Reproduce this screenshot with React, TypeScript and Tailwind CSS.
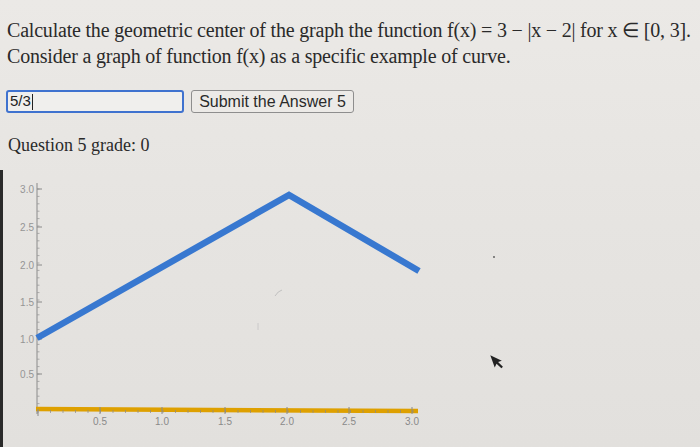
import React from "react";

function Chart() {
  const yLabels = [
    { t: "3.0", y: 189 },
    { t: "2.5", y: 227 },
    { t: "2.0", y: 265 },
    { t: "1.5", y: 302 },
    { t: "1.0", y: 339 },
    { t: "0.5", y: 374 },
  ];
  const xLabels = [
    { t: "0.5", x: 100 },
    { t: "1.0", x: 162 },
    { t: "1.5", x: 225 },
    { t: "2.0", x: 287 },
    { t: "2.5", x: 349 },
    { t: "3.0", x: 412 },
  ];
  const minorY: number[] = [];
  for (let y = 189; y <= 405; y += 7.4) minorY.push(y);
  const minorX: number[] = [];
  for (let x = 38; x <= 418; x += 12.5) minorX.push(x);
  return (
    <svg width="700" height="277" viewBox="0 170 700 277" className="block">
      {/* y axis */}
      <line x1="37" y1="183" x2="37" y2="414" stroke="#8a8a8a" strokeWidth="1" />
      {minorY.map((y, i) => (
        <line key={i} x1="37" y1={y} x2="39.5" y2={y} stroke="#9a9a9a" strokeWidth="0.8" />
      ))}
      {yLabels.map((l) => (
        <g key={l.t}>
          <line x1="37" y1={l.y} x2="42" y2={l.y} stroke="#8a8a8a" strokeWidth="1" />
          <text x="34" y={l.y + 3.5} textAnchor="end" fontSize="10" fill="#959595" fontFamily="'Liberation Sans', Arial, sans-serif">
            {l.t}
          </text>
        </g>
      ))}
      {/* x axis orange */}
      <line x1="36" y1="409" x2="418" y2="411" stroke="#dea000" strokeWidth="4.5" />
      {minorX.map((x, i) => (
        <line key={i} x1={x} y1="410" x2={x} y2="413" stroke="#8a8a8a" strokeWidth="0.7" />
      ))}
      {xLabels.map((l) => (
        <g key={l.t}>
          <line x1={l.x} y1="407" x2={l.x} y2="414" stroke="#8a8a8a" strokeWidth="1" />
          <text x={l.x} y="425" textAnchor="middle" fontSize="10" fill="#8a8a8a" fontFamily="'Liberation Sans', Arial, sans-serif">
            {l.t}
          </text>
        </g>
      ))}
      <line x1="38" y1="409" x2="38" y2="416" stroke="#8a8a8a" strokeWidth="1" />
      {/* blue function */}
      <polyline
        points="37,338 289,195 419,271"
        fill="none"
        stroke="#3878d0"
        strokeWidth="6.5"
        strokeLinejoin="miter"
      />
      {/* faint marks */}
      <path d="M275 296 q3 -5 7 -6" stroke="#b8b8b8" strokeWidth="0.8" fill="none" />
      <line x1="258" y1="323" x2="258" y2="330" stroke="#c4c4c4" strokeWidth="0.8" />
      <circle cx="494" cy="257" r="0.9" fill="#555" />
      {/* mouse cursor */}
      <path d="M492 355 L492 368 L495 365 L498 371 L500 370 L497 364 L501 364 Z" fill="#222" transform="rotate(-20 492 360)" />
    </svg>
  );
}

export default function App() {
  return (
    <div
      className="w-[700px] h-[447px] overflow-hidden relative text-[#2a2a2a]"
      style={{ background: "linear-gradient(180deg, #ebe9e6 0%, #e6e4e1 50%, #e2e0dd 100%)" }}
    >
      <div className="pl-[7px] pt-[17px] font-['Liberation_Serif',serif] text-[20px] leading-[26px] tracking-[-0.2px]">
        <div className="whitespace-nowrap">
          Calculate the geometric center of the graph the function f(x) = 3 − |x − 2| for x ∈ [0, 3].
        </div>
        <div className="whitespace-nowrap">Consider a graph of function f(x) as a specific example of curve.</div>
      </div>
      <div className="flex items-center pl-[6px] pt-[21px] gap-[7px]">
        <div className="w-[178px] h-[23px] border-2 border-[#3f72cf] rounded-[3px] bg-[#f0efed] flex items-center pl-[2px] font-['Liberation_Sans',Arial,sans-serif] text-[15px] text-[#222]">
          5/3<span className="inline-block w-px h-[16px] bg-[#222] ml-px" />
        </div>
        <div className="w-[163px] h-[23px] border border-[#8e8e8e] rounded-[3px] bg-[#eceae7] flex items-center justify-center font-['Liberation_Sans',Arial,sans-serif] text-[16px] text-[#2a2a2a]">
          Submit the Answer 5
        </div>
      </div>
      <div className="pl-[8px] pt-[21px] font-['Liberation_Serif',serif] text-[18px] leading-[22px]">
        Question 5 grade: 0
      </div>
      <div className="absolute left-0 top-[170px]">
        <Chart />
      </div>
      <div className="absolute left-0 top-[170px] w-[3px] h-[277px] bg-[#2a2a2a]" />
    </div>
  );
}
